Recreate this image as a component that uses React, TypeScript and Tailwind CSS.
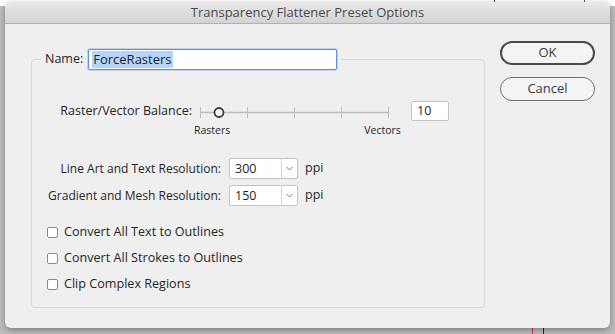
import React from 'react';

const font = { fontFamily: '"Open Sans", "DejaVu Sans", sans-serif' };

function Check({ label }: { label: string }) {
    return (
        <div className="flex items-center h-[26px]">
            <span className="w-[11px] h-[11px] border border-[#8a8a8a] rounded-[2px] bg-white ml-[15px] mr-[6px]" />
            <span className="text-[12.6px] text-[#262626]">{label}</span>
        </div>
    );
}

function Dropdown({ value }: { value: string }) {
    return (
        <div className="flex h-[21px] w-[69px] border border-[#c4c4c4] rounded-[2px] bg-white">
            <span className="flex-1 pl-[5px] text-[12.5px] leading-[19px] text-[#1e1e1e]">{value}</span>
            <span className="w-[16px] border-l border-[#d4d4d4] flex items-center justify-center">
                <svg width="7" height="5" viewBox="0 0 7 5">
                    <path d="M0.5 1 L3.5 4 L6.5 1" fill="none" stroke="#7a7a7a" strokeWidth="1" />
                </svg>
            </span>
        </div>
    );
}

function Slider() {
    const ticks = [0, 47, 94, 141, 188];
    return (
        <div className="relative w-[189px] h-[20px]">
            <svg width="189" height="20" viewBox="0 0 189 20">
                <line x1="0.5" y1="11.5" x2="188.5" y2="11.5" stroke="#bdbdbd" strokeWidth="1.5" />
                {ticks.map((t) => (
                    <line key={t} x1={t + 0.5} y1="6" x2={t + 0.5} y2="17" stroke="#bdbdbd" strokeWidth="1" />
                ))}
                <circle cx="19" cy="11.5" r="4.5" fill="#f4f4f4" stroke="#3d3d3d" strokeWidth="1.8" />
            </svg>
        </div>
    );
}

export default function App() {
    return (
        <div className="w-[615px] h-[334px] overflow-hidden bg-[#bdbdbd] relative" style={font}>
            {/* backdrop: document behind the dialog */}
            <div className="absolute inset-x-0 top-0 h-[6px] bg-white" />
            <div className="absolute top-0 left-[494px] w-px h-[6px] bg-[#555]" />
            <div className="absolute top-0 left-[584px] w-px h-[6px] bg-[#555]" />
            <div className="absolute bottom-0 left-[532px] w-px h-[8px] bg-[#d23a4a]" />
            <div className="absolute bottom-0 left-[543px] w-px h-[8px] bg-[#222]" />

            <div className="relative ml-[5px] mt-[2px] w-[605px] h-[326px] rounded-[6px] bg-[#efefef] shadow-[0_2px_6px_rgba(0,0,0,0.35)] overflow-hidden flex flex-col">
                <div className="h-[22px] shrink-0 bg-gradient-to-b from-[#e8e8e8] to-[#d3d3d3] border-b border-[#b1b1b1] flex items-center justify-center">
                    <span className="text-[13px] text-[#4a4a4a]">Transparency Flattener Preset Options</span>
                </div>

                <div className="flex flex-1">
                    <fieldset className="ml-[26px] mt-[25px] w-[454px] h-[259px] border border-[#d6d6d6] rounded-[4px] p-0 m-0 min-w-0">
                        <legend className="ml-[9px] px-[4px] flex items-center h-[21px]">
                            <span className="text-[12.5px] text-[#262626] mr-[5px]">Name:</span>
                            <span className="w-[249px] h-[21px] border border-[#5b8fe0] rounded-[2px] bg-white flex items-center pl-[3px] shadow-[0_0_0_1px_rgba(110,160,235,0.35)]">
                                <span className="bg-[#b4d4fc] text-[13px] leading-[17px] px-[1px] text-[#1e1e1e]">ForceRasters</span>
                            </span>
                        </legend>

                        <div className="flex items-center mt-[31px] h-[20px]">
                            <span className="w-[160px] text-right text-[12.5px] text-[#262626]">Raster/Vector Balance:</span>
                            <div className="ml-[8px]">
                                <Slider />
                            </div>
                            <div className="ml-[22px] w-[38px] h-[20px] border border-[#c4c4c4] rounded-[2px] bg-white pl-[5px] text-[12.5px] leading-[18px] text-[#1e1e1e]">
                                10
                            </div>
                        </div>

                        <div className="flex h-[18px] mt-[1px] text-[10.5px] text-[#262626] items-center">
                            <span className="ml-[162px]">Rasters</span>
                            <span className="ml-[134px]">Vectors</span>
                        </div>

                        <div className="flex flex-col gap-[6px] mt-[18px]">
                            <div className="flex items-center">
                                <span className="w-[189px] text-right text-[12px] text-[#262626]">Line Art and Text Resolution:</span>
                                <div className="ml-[8px]">
                                    <Dropdown value="300" />
                                </div>
                                <span className="ml-[7px] text-[12.5px] text-[#262626]">ppi</span>
                            </div>
                            <div className="flex items-center">
                                <span className="w-[189px] text-right text-[12px] text-[#262626]">Gradient and Mesh Resolution:</span>
                                <div className="ml-[8px]">
                                    <Dropdown value="150" />
                                </div>
                                <span className="ml-[7px] text-[12.5px] text-[#262626]">ppi</span>
                            </div>
                        </div>

                        <div className="flex flex-col mt-[13px]">
                            <Check label="Convert All Text to Outlines" />
                            <Check label="Convert All Strokes to Outlines" />
                            <Check label="Clip Complex Regions" />
                        </div>
                    </fieldset>

                    <div className="ml-[15px] mt-[17px] flex flex-col gap-[12px]">
                        <button className="w-[95px] h-[24px] rounded-full border-2 border-[#4a4a4a] bg-[#f4f4f4] text-[13px] text-[#3a3a3a]">
                            OK
                        </button>
                        <button className="w-[95px] h-[24px] rounded-full border border-[#6f6f6f] bg-[#f4f4f4] text-[13px] text-[#3a3a3a]">
                            Cancel
                        </button>
                    </div>
                </div>
            </div>
        </div>
    );
}
